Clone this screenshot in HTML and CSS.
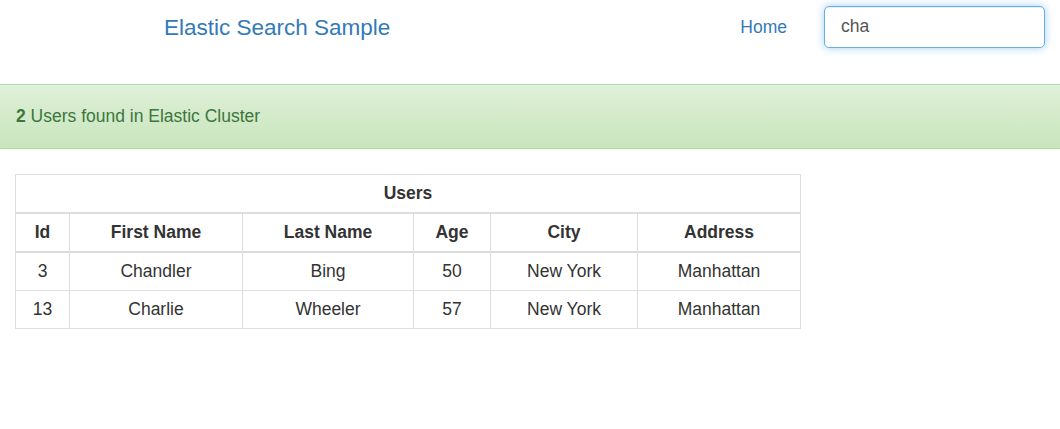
FILE: index.html
```html
<!DOCTYPE html>
<html lang="en">

<head>
    <meta charset="UTF-8">
    <meta name="viewport" content="width=device-width, initial-scale=1.0">
    <link rel="stylesheet" href="styles.css">
    <title>Elastic Search Sample</title>
</head>

<body>
    <nav class="navbar">
        <a href="#" class="navbar-brand">Elastic Search Sample</a>
        <a href="#" class="nav-link">Home</a>
        <input type="text" class="search-input" value="cha">
    </nav>

    <div class="alert">
        <strong>2</strong> Users found in Elastic Cluster
    </div>

    <table class="users-table">
        <colgroup>
            <col style="width: 54px">
            <col style="width: 173px">
            <col style="width: 171px">
            <col style="width: 77px">
            <col style="width: 147px">
            <col style="width: 163px">
        </colgroup>
        <thead>
            <tr>
                <th colspan="6">Users</th>
            </tr>
            <tr>
                <th>Id</th>
                <th>First Name</th>
                <th>Last Name</th>
                <th>Age</th>
                <th>City</th>
                <th>Address</th>
            </tr>
        </thead>
        <tbody>
            <tr>
                <td>3</td>
                <td>Chandler</td>
                <td>Bing</td>
                <td>50</td>
                <td>New York</td>
                <td>Manhattan</td>
            </tr>
            <tr>
                <td>13</td>
                <td>Charlie</td>
                <td>Wheeler</td>
                <td>57</td>
                <td>New York</td>
                <td>Manhattan</td>
            </tr>
        </tbody>
    </table>
</body>

</html>
```

FILE: styles.css
```css
/* Global styles */
body {
    font-family: "Liberation Sans", Arial, sans-serif;
    font-size: 17.5px;
    line-height: 25px;
    color: #333;
    margin: 0;
    padding: 0;
    background-color: #fff;
}

a {
    color: #337ab7;
    text-decoration: none;
}

/* Navbar */
.navbar {
    display: flex;
    align-items: center;
    height: 54px;
    margin-bottom: 30px;
}

.navbar-brand {
    font-size: 22.5px;
    margin-left: 164px;
}

.nav-link {
    margin-left: auto;
    margin-right: 37px;
}

.search-input {
    width: 221px;
    height: 42px;
    box-sizing: border-box;
    padding: 0 16px;
    font-family: inherit;
    font-size: 17.5px;
    color: #555;
    border: 1px solid #66afe9;
    border-radius: 5px;
    outline: 0;
    margin-right: 15px;
    margin-top: -1px;
    box-shadow: inset 0 1px 1px rgba(0, 0, 0, .075), 0 0 8px rgba(102, 175, 233, .6);
}

/* Alert */
.alert {
    padding: 19px 16px;
    color: #3c763d;
    border-top: 1px solid #b2dba1;
    border-bottom: 1px solid #b2dba1;
    background-image: linear-gradient(to bottom, #dff0d8 0, #c8e5bc 100%);
    box-shadow: inset 0 1px 0 rgba(255, 255, 255, .25), 0 1px 2px rgba(0, 0, 0, .05);
    margin-bottom: 25px;
}

/* Table */
.users-table {
    border-collapse: collapse;
    table-layout: fixed;
    width: 785px;
    margin-left: 15px;
}

.users-table th,
.users-table td {
    border: 1px solid #ddd;
    padding: 6px 5px;
    text-align: center;
    line-height: 25px;
}

.users-table thead th {
    border-bottom-width: 2px;
}
```
